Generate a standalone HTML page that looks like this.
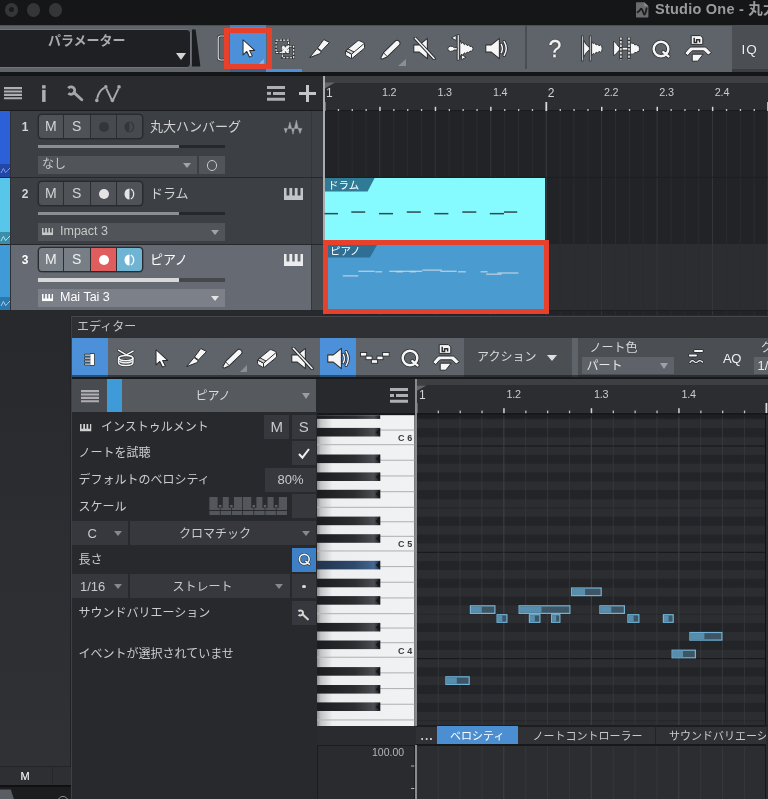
<!DOCTYPE html>
<html lang="ja">
<head>
<meta charset="utf-8">
<title>Studio One</title>
<style>
*{box-sizing:border-box;margin:0;padding:0}
html,body{width:768px;height:799px;overflow:hidden;background:#27282b}
body{background:linear-gradient(180deg,#27282b 0,#28292c 330px,#2d2e31 560px,#303134 767px)}
body{position:relative;font-family:"Liberation Sans","Noto Sans CJK JP",sans-serif;color:#c8c8c8;font-size:13px;line-height:1}
.a{position:absolute}
.t{position:absolute;white-space:nowrap;line-height:1;will-change:opacity}
.trk .num,.trk .name{will-change:opacity}
svg{position:absolute;overflow:visible}
/* title bar */
#title{left:0;top:0;width:768px;height:25px;background:#151618}
.tl{position:absolute;top:3.2px;width:13.4px;height:13.4px;border-radius:50%;background:#353638}
/* toolbar */
#tb{left:0;top:25px;width:768px;height:47px;background:#5f646b;border-top:1px solid #4c4f55}
#tbline{left:0;top:72px;width:768px;height:4px;background:#141517}
#hdr{left:0;top:76px;width:768px;height:34px;background:#2a2b2f}
#hdrline{left:0;top:109.8px;width:768px;height:1.8px;background:#1a1b1d}
/* tracks */
.trk{position:absolute;left:0;width:324px;background:#3c3f44}
.trk .strip{position:absolute;left:0;top:0;width:10px;height:100%}
.trk:after{content:"";position:absolute;left:10px;top:0;width:1px;height:100%;background:#2e3034}
.trk .sub{position:absolute;left:0;bottom:0;width:10px;height:13px}
.trk .num{position:absolute;left:19px;top:9.8px;width:12px;text-align:center;font-weight:bold;font-size:12px;color:#d0d0d0}
.trk .btns{position:absolute;left:38px;top:3.2px;width:105px;height:24.5px;border-radius:4px;border:1px solid #292b2f;background:#2c2e32;overflow:hidden;display:flex;gap:0.9px;box-shadow:0 0 0 0.5px rgba(30,32,35,0.6)}
.trk .btns div{flex:1 1 25px;background:#565a60;position:relative;color:#dcdcdc;font-size:14px;text-align:center;line-height:22px}
.trk .btns div:nth-child(1){flex-basis:23.6px}.trk .btns div:nth-child(2){flex-basis:26px}
.g{will-change:opacity;display:inline-block}
.trk .name{position:absolute;left:150px;top:9.2px;font-size:13px;color:#d0d0d0;white-space:nowrap}
.trk .sl{position:absolute;left:38px;top:34px;width:187px;height:3.4px;background:#26282b}
.trk .sl i{position:absolute;left:0;top:0;height:3.4px;width:141px;background:#8b8f95}
.trk .dd{position:absolute;left:38px;top:45.2px;height:17.5px;background:#53565c;font-size:12px;color:#c6c6c6;line-height:17px;padding-left:4px;white-space:nowrap}
.trk .rc{position:absolute;left:311.2px;top:0;width:12.8px;height:100%;background:#3c3f44;border-left:1.6px solid #33363a}
.tri{position:absolute;width:0;height:0;border-left:4.5px solid transparent;border-right:4.5px solid transparent;border-top:6px solid #9a9da2}
</style>
</head>
<body>
<!-- TITLE BAR -->
<div id="title" class="a">
  <div class="tl" style="left:4.5px"><div class="a" style="left:4px;top:4px;width:5px;height:5px;border-radius:50%;background:#1a1b1d"></div></div>
  <div class="tl" style="left:26.5px"></div>
  <div class="tl" style="left:48.5px"></div>
  <svg style="left:635.8px;top:1.5px" width="12.4" height="15.6" viewBox="0 0 13 16"><path d="M0.6 0H8.6L13 4.4V15.4Q13 16 12.4 16H0.6Q0 16 0 15.4V0.6Q0 0 0.6 0Z" fill="#696b6e"/><path d="M8.6 0V4.4H13Z" fill="#8a8c8f"/><path d="M1.6 10.6 Q3.4 9.4 4.6 7.6 Q5.8 6 6.6 8.2 Q7.4 10.4 8.4 12.6 Q9.2 13.8 10 11 L11.2 6.4" stroke="#1d1e20" stroke-width="1.9" fill="none" stroke-linecap="round"/></svg>
  <div class="t" style="left:655px;top:2px;font-size:14.5px;font-weight:bold;color:#9a9b9e;letter-spacing:0.24px">Studio One - 丸大</div>
</div>

<!-- MAIN TOOLBAR -->
<div id="tb" class="a"></div>
<div id="tbline" class="a"></div>
<div id="hdr" class="a"></div>
<div id="hdrline" class="a"></div>

<!-- icon symbols -->
<svg width="0" height="0" style="left:0;top:0">
<defs>
<symbol id="i-arrow" viewBox="0 0 24 24"><path d="M5.5 3 L5.5 19.5 L9.6 15.8 L12.6 22 L15.6 20.6 L12.7 14.7 L18.2 14.7 Z" fill="#fff" stroke="#2a2c2f" stroke-width="1.1" stroke-linejoin="round"/></symbol>
<symbol id="i-knife" viewBox="0 0 21 19"><g fill="#f6f6f6" stroke="#2a2c2f" stroke-width="1" stroke-linejoin="round"><path d="M14.8 0.5 L20.5 3.5 L12.5 11.9 L8.5 9 Z"/><path d="M8 9.6 L12.1 12.5 L11.6 14.4 L0.6 18.6 Z"/></g></symbol>
<symbol id="i-eraser" viewBox="0 0 20 19"><g fill="#f6f6f6" stroke="#2a2c2f" stroke-width="1" stroke-linejoin="round"><path d="M0.6 10.8 L12.6 1 Q13.6 0.3 14.8 0.8 L18.6 2.6 Q19.5 3.2 19.5 4.2 L19.5 7.4 Q19.5 8.2 18.8 8.8 L7.6 18 Q6.6 18.8 5.6 18.2 L1.4 15.8 Q0.6 15.2 0.6 14.4 Z"/><path d="M0.8 11 L6.5 14.2 L19.3 3.4 M6.5 14.2 L6.5 18.4" fill="none"/><path d="M3 8.9 L9 12 L6.5 14.1 L0.9 10.9Z" fill="#cfd0d2"/></g></symbol>
<symbol id="i-pencil" viewBox="0 0 21 21"><g transform="translate(1.4 19.6) rotate(-44.3)" fill="#f6f6f6" stroke="#2a2c2f" stroke-width="1" stroke-linejoin="round"><path d="M1.2 -1.3 L5.6 -2.8 L22 -2.8 A2.8 2.8 0 0 1 22 2.8 L5.6 2.8 L1.2 1.3 A1.3 1.3 0 0 1 1.2 -1.3 Z"/><path d="M5.6 -2.8 V2.8" fill="none" stroke-width="0.9"/></g></symbol>
<symbol id="i-mute" viewBox="0 0 24 24"><path d="M0.8 8.2 H6.6 L15 1.4 V22.6 L6.6 15.8 H0.8 Z" fill="#f6f6f6" stroke="#2a2c2f" stroke-width="1.1" stroke-linejoin="round"/><path d="M2.4 1.4 L22 22.4" stroke="#2a2c2f" stroke-width="3.6" stroke-linecap="round"/><path d="M2.4 1.4 L22 22.4" stroke="#f6f6f6" stroke-width="1.6" stroke-linecap="round"/></symbol>
<symbol id="i-spk" viewBox="0 0 24 24"><path d="M0.8 8.2 H6.6 L15 1.4 V22.6 L6.6 15.8 H0.8 Z" fill="#f6f6f6" stroke="#2a2c2f" stroke-width="1.1" stroke-linejoin="round"/><g fill="none" stroke-linecap="round"><path d="M17 7.6 Q19.4 12 17 16.4 M20 4.8 Q24.4 12 20 19.2" stroke="#2a2c2f" stroke-width="3.2"/><path d="M17 7.6 Q19.4 12 17 16.4 M20 4.8 Q24.4 12 20 19.2" stroke="#f6f6f6" stroke-width="1.5"/></g></symbol>
<symbol id="i-q" viewBox="0 0 24 24"><g fill="none" stroke-linecap="round"><path d="M12 4 A8 8 0 1 0 12 20 A8 8 0 1 0 12 4 Z M14.6 15.4 L20.2 20" stroke="#2a2c2f" stroke-width="4.4"/><path d="M12 4 A8 8 0 1 0 12 20 A8 8 0 1 0 12 4 Z M14.6 15.4 L20.2 20" stroke="#f6f6f6" stroke-width="2.7"/></g></symbol>
<symbol id="i-bounce" viewBox="0 0 28 27"><g fill="#f6f6f6" stroke="#2a2c2f" stroke-width="1" stroke-linejoin="round"><path d="M7.2 0.6 H16.4 L18.8 3 V9.4 H7.2 Z"/><path d="M0.7 18.2 L5.2 13 Q6.2 12 7.6 12 H20.4 Q21.8 12 22.8 13 L27.4 17.8 L24.2 20 L20.6 16.4 Q20 15.8 19.2 15.8 H8.8 Q8 15.8 7.4 16.4 L3.8 20.6 Z"/><path d="M8.2 19.2 H19.2 L13.8 26.2 H8.2 Z"/></g><path d="M10.2 2.8 V7.4 H12.6 V4.8 H15.6 V7.4" fill="none" stroke="#2a2c2f" stroke-width="1.5"/></symbol>
<symbol id="i-kbd" viewBox="0 0 12 8"><path d="M0 0H1.6V5H3.4V0H5.2V5H6.8V0H8.6V5H10.4V0H12V8H0Z"/></symbol>
</defs>
</svg>

<!-- toolbar content -->
<div class="a" style="left:-2px;top:28.5px;width:193px;height:39px;background:#1f2023;border:1px solid #70747a;border-radius:0 4px 4px 0"></div>
<svg style="left:192px;top:29px" width="10" height="38" viewBox="0 0 10 38"><path d="M0 0.5 H3.6 L8.4 37.5 H0 Z" fill="#1b1c1f"/></svg>
<div class="t" style="left:48px;top:33.7px;font-size:13px;font-weight:bold;color:#a9aaad">パラメーター</div>
<div class="tri" style="left:175.5px;top:53px;border-left-width:5.5px;border-right-width:5.5px;border-top:7px solid #d4d4d4"></div>
<svg style="left:216.8px;top:35.4px" width="8" height="26" viewBox="0 0 8 26"><path d="M7 1 H3.6 Q1.2 1 1.2 3.4 V22.6 Q1.2 25 3.6 25 H7" fill="none" stroke="#2a2c2f" stroke-width="2.4"/><path d="M7 1 H3.6 Q1.2 1 1.2 3.4 V22.6 Q1.2 25 3.6 25 H7" fill="none" stroke="#dedede" stroke-width="1.2"/></svg>
<div class="a" style="left:230px;top:25px;width:36px;height:44px;background:#4b90d8"></div><div class="a" style="left:230px;top:25px;width:36px;height:2px;background:#4480c2"></div>
<div class="a" style="left:230px;top:69px;width:36px;height:3px;background:#3d618a"></div><div class="a" style="left:266px;top:69px;width:36px;height:3px;background:#4b90d8"></div>
<div class="a" style="left:223.9px;top:27.7px;width:48.4px;height:41.2px;border:solid #e8412b;border-width:5.5px 5.9px 5.3px 5.8px"></div>
<svg style="left:259.2px;top:58.8px" width="4.8" height="4.8" viewBox="0 0 6 6"><path d="M6 0V6H0Z" fill="#93b8dc"/></svg>
<svg style="left:238px;top:37px" width="22" height="22"><use href="#i-arrow"/></svg>
<!-- marquee -->
<svg style="left:275.4px;top:39px" width="20" height="20" viewBox="0 0 20 20"><g fill="none"><rect x="1.1" y="1.1" width="12.4" height="12.4" stroke="#2a2c2f" stroke-width="2.2"/><rect x="7.3" y="7.3" width="11.4" height="11.4" stroke="#2a2c2f" stroke-width="2.2"/><rect x="1.1" y="1.1" width="12.4" height="12.4" stroke="#f2f2f2" stroke-width="1.1" stroke-dasharray="2.3 1.2"/><rect x="7.3" y="7.3" width="11.4" height="11.4" stroke="#f2f2f2" stroke-width="1.1" stroke-dasharray="2.3 1.2"/></g><path d="M7.6 7.6 L13.2 13.2 M13.2 7.6 L7.6 13.2" stroke="#f2f2f2" stroke-width="2.6"/></svg>
<svg style="left:308.5px;top:39px" width="21" height="19"><use href="#i-knife"/></svg>
<svg style="left:344.5px;top:40px" width="20" height="19"><use href="#i-eraser"/></svg>
<svg style="left:380px;top:39px" width="21" height="21"><use href="#i-pencil"/></svg>
<svg style="left:398px;top:59px" width="8" height="7" viewBox="0 0 8 7"><path d="M8 0V7H0Z" fill="#8b8f95"/></svg>
<svg style="left:413px;top:37px" width="23" height="23"><use href="#i-mute"/></svg>
<!-- split at transient -->
<svg style="left:447px;top:34px" width="28" height="27" viewBox="0 0 28 27"><g fill="#f6f6f6" stroke="#2a2c2f" stroke-width="0.9" stroke-linejoin="round"><path d="M10.2 0.6 H12.3 V26.3 H10.2 Z"/><path d="M9.2 1.3 L4.4 3.9 L9.2 6.5 Z"/><path d="M14.4 20.6 L19 23.2 L14.4 25.8 Z"/><path d="M0.8 14.8 Q0.8 12.4 3.6 12.2 Q6 12.2 7.2 13.6 L10.2 13.6 V16 L7.2 16 Q6 17.4 3.6 17.4 Q0.8 17.2 0.8 14.8 Z"/><path d="M12.8 6 L14.6 9.6 L15.8 8.2 L17.4 10.8 L18.8 9.6 L20.2 11.6 L21.8 10.8 L23 12.6 L24.6 12.2 L26.2 14.8 L24.6 17.4 L23 17 L21.8 18.8 L20.2 18 L18.8 20 L17.4 18.8 L15.8 21.4 L14.6 20 L12.8 23.6 Z"/></g></svg>
<svg style="left:485px;top:37px" width="23" height="23"><use href="#i-spk"/></svg>
<div class="a" style="left:525.3px;top:25px;width:1.5px;height:44px;background:#4a4d52"></div>
<div class="t" style="left:548.6px;top:37.6px;font-size:23px;color:#f4f4f4;-webkit-text-stroke:0.3px #f4f4f4;text-shadow:0 0 1.2px #26282b,0 0 1.2px #26282b">?</div>
<!-- strip silence icons -->
<svg style="left:581px;top:35px" width="22" height="27" viewBox="0 0 22 27"><g fill="#f6f6f6" stroke="#2a2c2f" stroke-width="0.9" stroke-linejoin="round"><path d="M2.6 5.2 Q5.2 10.6 8.2 12.3 H11 V14.9 H8.2 Q5.2 16.6 2.6 22.2 Z"/><path d="M10.6 6.4 L12.4 8.8 L13.6 7.8 L15.2 10 L16.6 9.2 L18 10.8 L19.4 10 L20.6 10.6 Q21.8 13.6 20.6 16.6 L19.4 17.2 L18 16.4 L16.6 18 L15.2 17.2 L13.6 19.4 L12.4 18.4 L10.6 20.8 Z"/><path d="M0.5 0.8 H2.2 V26 H0.5 Z"/><path d="M8.4 0.8 H10.1 V26 H8.4 Z"/></g></svg>
<svg style="left:613px;top:36px" width="27" height="25" viewBox="0 0 27 25"><g fill="#f6f6f6" stroke="#2a2c2f" stroke-width="0.9" stroke-linejoin="round"><path d="M0.6 5 L2.2 6.6 L3.4 7.6 L5 10 L6.8 11.3 V14.1 L5 15.4 L3.4 17.6 L2.2 18.6 L0.6 19.8 Z"/><path d="M8.9 11.3 H15 V14.1 H8.9 Z"/><path d="M17.2 5.6 L18.8 7.5 L20.2 7 L21.8 8.9 L23.2 8.5 L24.6 9.7 L26 9.7 Q27 12.6 26 15.5 L24.6 15.6 L23.2 16.8 L21.8 16.4 L20.2 18.4 L18.8 17.9 L17.2 19.3 Z"/></g><g stroke="#2a2c2f" stroke-width="3" fill="none"><path d="M7.9 1 V23.6 M16 1 V23.6"/></g><g stroke="#f6f6f6" stroke-width="1.5" stroke-dasharray="2.4 1.2" fill="none"><path d="M7.9 1.4 V23.4 M16 1.4 V23.4"/></g></svg>
<svg style="left:650px;top:38px" width="22" height="22"><use href="#i-q"/></svg>
<svg style="left:683.6px;top:35px" width="28" height="27"><use href="#i-bounce"/></svg>
<div class="a" style="left:731.5px;top:25px;width:37px;height:44px;background:#4b4e53"></div><div class="a" style="left:731.5px;top:69px;width:37px;height:3px;background:#3a3d41"></div>
<div class="t" style="left:741.6px;top:43.4px;font-size:13.5px;color:#f0f0f0;letter-spacing:0.9px;text-shadow:0 0 1px #2a2c2f">IQ</div>


<!--MID-START-->
<!-- header icons -->
<svg style="left:4.3px;top:87.2px" width="18" height="13" viewBox="0 0 18 13"><path d="M0 1.1H18M0 4.5H18M0 7.9H18M0 11.3H18" stroke="#aeafb2" stroke-width="2.1"/></svg>
<svg style="left:41px;top:85px" width="6" height="17" viewBox="0 0 6 17"><rect x="1.1" y="0.2" width="3.5" height="3.3" fill="#aeafb2"/><rect x="1.1" y="4.9" width="3.5" height="12" fill="#aeafb2"/></svg>
<svg style="left:56px;top:78px" width="80" height="30" viewBox="0 0 80 30"><g fill="none" stroke="#a6a7aa" stroke-linecap="butt"><path d="M12.2 10.2 A3.7 3.7 0 1 1 12.4 15.2" stroke-width="2.7"/><path d="M18 14.6 L25.8 21.8" stroke-width="2.9" stroke-linecap="round"/><path d="M41.2 20.6 Q42.6 12.6 48.6 9.6" stroke-width="1.9"/><path d="M50.4 10.6 L55.8 22 M57 22 L62.4 10.6" stroke-width="1.9"/></g><g fill="#a6a7aa"><circle cx="40.8" cy="22.4" r="1.8"/><circle cx="49.8" cy="8.9" r="1.8"/><circle cx="56.4" cy="22.4" r="1.8"/><circle cx="63" cy="8.9" r="1.8"/></g></svg>
<svg style="left:267px;top:86px" width="18" height="15" viewBox="0 0 18 15"><path d="M0 1.6H18M6 7.4H18M0 13.2H18" stroke="#aeafb2" stroke-width="3"/><path d="M0 7.4H4" stroke="#aeafb2" stroke-width="3"/></svg>
<svg style="left:299px;top:85px" width="17" height="17" viewBox="0 0 17 17"><path d="M8.5 0V17M0 8.5H17" stroke="#c4c5c8" stroke-width="3"/></svg>
<!-- arrangement ruler -->
<div class="a" style="left:324px;top:76px;width:444px;height:34px;background:#2c2d31"></div>
<div class="a" style="left:324px;top:76px;width:444px;height:6.6px;background:#3d3f43"></div>
<svg style="left:0;top:0" width="768" height="111" viewBox="0 0 768 111"><rect x="323.6" y="102" width="1.8" height="9.6" fill="#d8d8d8"/><rect x="337.8" y="109" width="1.3" height="2.6" fill="#c4c4c4"/><rect x="351.6" y="109" width="1.3" height="2.6" fill="#c4c4c4"/><rect x="365.5" y="109" width="1.3" height="2.6" fill="#c4c4c4"/><rect x="379.2" y="106.8" width="1.5" height="4.8" fill="#d4d4d4"/><rect x="393.2" y="109" width="1.3" height="2.6" fill="#c4c4c4"/><rect x="407.1" y="109" width="1.3" height="2.6" fill="#c4c4c4"/><rect x="420.9" y="109" width="1.3" height="2.6" fill="#c4c4c4"/><rect x="434.7" y="106.8" width="1.5" height="4.8" fill="#d4d4d4"/><rect x="448.7" y="109" width="1.3" height="2.6" fill="#c4c4c4"/><rect x="462.5" y="109" width="1.3" height="2.6" fill="#c4c4c4"/><rect x="476.4" y="109" width="1.3" height="2.6" fill="#c4c4c4"/><rect x="490.1" y="106.8" width="1.5" height="4.8" fill="#d4d4d4"/><rect x="504.1" y="109" width="1.3" height="2.6" fill="#c4c4c4"/><rect x="518.0" y="109" width="1.3" height="2.6" fill="#c4c4c4"/><rect x="531.8" y="109" width="1.3" height="2.6" fill="#c4c4c4"/><rect x="545.4" y="102" width="1.8" height="9.6" fill="#d8d8d8"/><rect x="559.6" y="109" width="1.3" height="2.6" fill="#c4c4c4"/><rect x="573.4" y="109" width="1.3" height="2.6" fill="#c4c4c4"/><rect x="587.3" y="109" width="1.3" height="2.6" fill="#c4c4c4"/><rect x="601.0" y="106.8" width="1.5" height="4.8" fill="#d4d4d4"/><rect x="615.0" y="109" width="1.3" height="2.6" fill="#c4c4c4"/><rect x="628.9" y="109" width="1.3" height="2.6" fill="#c4c4c4"/><rect x="642.7" y="109" width="1.3" height="2.6" fill="#c4c4c4"/><rect x="656.5" y="106.8" width="1.5" height="4.8" fill="#d4d4d4"/><rect x="670.5" y="109" width="1.3" height="2.6" fill="#c4c4c4"/><rect x="684.3" y="109" width="1.3" height="2.6" fill="#c4c4c4"/><rect x="698.2" y="109" width="1.3" height="2.6" fill="#c4c4c4"/><rect x="711.9" y="106.8" width="1.5" height="4.8" fill="#d4d4d4"/><rect x="725.9" y="109" width="1.3" height="2.6" fill="#c4c4c4"/><rect x="739.8" y="109" width="1.3" height="2.6" fill="#c4c4c4"/><rect x="753.6" y="109" width="1.3" height="2.6" fill="#c4c4c4"/><rect x="767.2" y="102" width="1.8" height="9.6" fill="#d8d8d8"/><path d="M325 82.6 H335 L325 88.4Z" fill="#62656a"/></svg>
<div class="t" style="left:326.0px;top:86.8px;font-size:12px;color:#d4d4d4">1</div>
<div class="t" style="left:382.0px;top:87.4px;font-size:10.8px;letter-spacing:-0.2px;color:#cbcbcd">1.2</div>
<div class="t" style="left:437.5px;top:87.4px;font-size:10.8px;letter-spacing:-0.2px;color:#cbcbcd">1.3</div>
<div class="t" style="left:492.9px;top:87.4px;font-size:10.8px;letter-spacing:-0.2px;color:#cbcbcd">1.4</div>
<div class="t" style="left:547.8px;top:86.8px;font-size:12px;color:#d4d4d4">2</div>
<div class="t" style="left:603.9px;top:87.4px;font-size:10.8px;letter-spacing:-0.2px;color:#cbcbcd">2.2</div>
<div class="t" style="left:659.3px;top:87.4px;font-size:10.8px;letter-spacing:-0.2px;color:#cbcbcd">2.3</div>
<div class="t" style="left:714.8px;top:87.4px;font-size:10.8px;letter-spacing:-0.2px;color:#cbcbcd">2.4</div>
<!-- tracks -->
<div class="trk" style="top:111px;height:65.6px;background:#3c3f44">
<div class="strip" style="background:#2b60d8"></div><div class="sub" style="background:#2347a8"><svg style="left:1px;bottom:3px" width="9" height="7" viewBox="0 0 9 7"><path d="M0 6 L2.4 1.4 L4.6 5.6 L6.6 3.4 L9 1" fill="none" stroke="#7f9be0" stroke-width="1"/></svg></div>
<div class="num" style="color:#d4d4d4">1</div>
<div class="btns"><div style="background:#4f5257;color:#d4d4d4"><span class="g">M</span></div><div style="background:#4f5257;color:#d4d4d4"><span class="g">S</span></div><div style="background:#474a4e"><span class="a" style="left:8px;top:6.5px;width:10px;height:10px;border-radius:50%;background:#34373a"></span></div><div style="background:#474a4e"><svg style="left:7.5px;top:5.5px" width="11" height="12" viewBox="0 0 11 12"><path d="M5.5 0.5 A5 5.5 0 0 0 5.5 11.5 Z" fill="#34373a"/><path d="M6.6 1 A5 5.5 0 0 1 6.6 11" fill="none" stroke="#34373a" stroke-width="1.2"/></svg></div></div>
<div class="name" style="color:#d2d2d2">丸大ハンバーグ</div>
<svg style="left:283.5px;top:8.6px" width="18" height="15" viewBox="0 0 18 15"><path d="M0.2 8.4 H3.4 L1.8 13 Z M4.2 8.4 L5.9 2 L7.6 8.4 L9 14.3 L10.4 8.4 L12.4 0.2 L14.2 8.4 H17.8 L16 13.6 L14.2 8.4 H10.6 L9 8.4 L7.6 8.4 Z" fill="#a6a7aa" stroke="#a6a7aa" stroke-width="0.5" stroke-linejoin="round"/></svg>
<div class="sl" style="background:#26282b"><i style="background:#8b8f95"></i></div>
<div class="dd" style="width:159px;background:#515459;color:#c8c8c8"><span class="g">なし</span></div>
<div class="tri" style="left:182.9px;top:51.6px;border-left-width:4.3px;border-right-width:4.3px;border-top:5.4px solid #a2a3a5"></div>
<div class="dd" style="left:198.5px;width:26.5px;padding:0;background:#515459"><span class="a" style="left:8.3px;top:4.2px;width:10.4px;height:10.4px;border-radius:50%;border:1.8px solid #c6c7c8"></span></div>
<div class="rc" style="background:#3c3f44"></div>
</div>
<div class="trk" style="top:178px;height:66.5px;background:#3c3f44">
<div class="strip" style="background:#57c6e8"></div><div class="sub" style="background:#3c8ea8"><svg style="left:1px;bottom:3px" width="9" height="7" viewBox="0 0 9 7"><path d="M0 6 L2.4 1.4 L4.6 5.6 L6.6 3.4 L9 1" fill="none" stroke="#a8e4f4" stroke-width="1"/></svg></div>
<div class="num" style="color:#d4d4d4">2</div>
<div class="btns"><div style="background:#4f5257;color:#d4d4d4"><span class="g">M</span></div><div style="background:#4f5257;color:#d4d4d4"><span class="g">S</span></div><div style="background:#4f5257"><span class="a" style="left:8px;top:6.5px;width:10px;height:10px;border-radius:50%;background:#e4e4e4"></span></div><div style="background:#4f5257"><svg style="left:7.5px;top:5.5px" width="11" height="12" viewBox="0 0 11 12"><path d="M5.5 0.5 A5 5.5 0 0 0 5.5 11.5 Z" fill="#e4e4e4"/><path d="M6.8 1 A5 5.5 0 0 1 6.8 11" fill="none" stroke="#e4e4e4" stroke-width="1.2"/></svg></div></div>
<div class="name" style="color:#d2d2d2">ドラム</div>
<svg style="left:284px;top:9.5px" width="19" height="12" viewBox="0 0 12 8" preserveAspectRatio="none"><use href="#i-kbd" fill="#c4c5c8"/></svg>
<div class="sl" style="background:#26282b"><i style="background:#8b8f95"></i></div>
<div class="dd" style="width:187px;background:#515459;color:#c8c8c8;padding-left:22px;font-size:12.5px"><span class="g">Impact 3</span></div>
<svg style="left:41.8px;top:50.2px" width="11.2" height="7.2" viewBox="0 0 12 8" preserveAspectRatio="none"><use href="#i-kbd" fill="#c8c8c8"/></svg>
<div class="tri" style="left:210.9px;top:51.8px;border-left-width:4.3px;border-right-width:4.3px;border-top:5.4px solid #a2a3a5"></div>
<div class="rc" style="background:#3c3f44"></div>
</div>
<div class="trk" style="top:244.3px;height:65.7px;background:#666a72">
<div class="strip" style="background:#3f9bd8"></div><div class="sub" style="background:#2a78ae"><svg style="left:1px;bottom:3px" width="9" height="7" viewBox="0 0 9 7"><path d="M0 6 L2.4 1.4 L4.6 5.6 L6.6 3.4 L9 1" fill="none" stroke="#9fd0f0" stroke-width="1"/></svg></div>
<div class="num" style="color:#fff">3</div>
<div class="btns"><div style="background:#787e86;color:#f0f0f0"><span class="g">M</span></div><div style="background:#787e86;color:#f0f0f0"><span class="g">S</span></div><div style="background:#e05d5d"><span class="a" style="left:8px;top:6.5px;width:10px;height:10px;border-radius:50%;background:#ffffff"></span></div><div style="background:#6fb4d2"><svg style="left:7.5px;top:5.5px" width="11" height="12" viewBox="0 0 11 12"><path d="M5.5 0.5 A5 5.5 0 0 0 5.5 11.5 Z" fill="#ffffff"/><path d="M6.8 1 A5 5.5 0 0 1 6.8 11" fill="none" stroke="#ffffff" stroke-width="1.2"/></svg></div></div>
<div class="name" style="color:#fff">ピアノ</div>
<svg style="left:284px;top:9.5px" width="19" height="12" viewBox="0 0 12 8" preserveAspectRatio="none"><use href="#i-kbd" fill="#ececec"/></svg>
<div class="sl" style="background:#44474c"><i style="background:#d6d8da"></i></div>
<div class="dd" style="width:187px;background:#7c8189;color:#ffffff;padding-left:22px;font-size:12.5px"><span class="g">Mai Tai 3</span></div>
<svg style="left:41.8px;top:50.2px" width="11.2" height="7.2" viewBox="0 0 12 8" preserveAspectRatio="none"><use href="#i-kbd" fill="#ffffff"/></svg>
<div class="tri" style="left:210.9px;top:51.8px;border-left-width:4.3px;border-right-width:4.3px;border-top:5.4px solid #e4e4e4"></div>
<div class="rc" style="background:#46494e"></div>
</div>
<div class="a" style="left:0;top:176.5px;width:324px;height:1.5px;background:#26282b"></div>
<div class="a" style="left:0;top:243.8px;width:324px;height:1px;background:#26282b"></div>
<div class="a" style="left:323.4px;top:76px;width:1.5px;height:238px;background:#a8aaad"></div>
<!-- arrangement -->
<div class="a" style="left:325.4px;top:111px;width:443px;height:204px;background:#222326"></div>
<div class="a" style="left:325.4px;top:243.8px;width:443px;height:66.4px;background:#2c2d30"></div>
<svg style="left:0;top:0" width="768" height="316" viewBox="0 0 768 316"><rect x="337.8" y="111" width="1" height="204" fill="#2b2c30"/><rect x="351.6" y="111" width="1" height="204" fill="#2b2c30"/><rect x="365.5" y="111" width="1" height="204" fill="#2b2c30"/><rect x="379.3" y="111" width="1" height="204" fill="#333539"/><rect x="393.2" y="111" width="1" height="204" fill="#2b2c30"/><rect x="407.1" y="111" width="1" height="204" fill="#2b2c30"/><rect x="420.9" y="111" width="1" height="204" fill="#2b2c30"/><rect x="434.8" y="111" width="1" height="204" fill="#333539"/><rect x="448.7" y="111" width="1" height="204" fill="#2b2c30"/><rect x="462.5" y="111" width="1" height="204" fill="#2b2c30"/><rect x="476.4" y="111" width="1" height="204" fill="#2b2c30"/><rect x="490.2" y="111" width="1" height="204" fill="#333539"/><rect x="504.1" y="111" width="1" height="204" fill="#2b2c30"/><rect x="518.0" y="111" width="1" height="204" fill="#2b2c30"/><rect x="531.8" y="111" width="1" height="204" fill="#2b2c30"/><rect x="545.7" y="111" width="1" height="204" fill="#3a3c40"/><rect x="559.6" y="111" width="1" height="204" fill="#2b2c30"/><rect x="573.4" y="111" width="1" height="204" fill="#2b2c30"/><rect x="587.3" y="111" width="1" height="204" fill="#2b2c30"/><rect x="601.1" y="111" width="1" height="204" fill="#333539"/><rect x="615.0" y="111" width="1" height="204" fill="#2b2c30"/><rect x="628.9" y="111" width="1" height="204" fill="#2b2c30"/><rect x="642.7" y="111" width="1" height="204" fill="#2b2c30"/><rect x="656.6" y="111" width="1" height="204" fill="#333539"/><rect x="670.5" y="111" width="1" height="204" fill="#2b2c30"/><rect x="684.3" y="111" width="1" height="204" fill="#2b2c30"/><rect x="698.2" y="111" width="1" height="204" fill="#2b2c30"/><rect x="712.0" y="111" width="1" height="204" fill="#333539"/><rect x="725.9" y="111" width="1" height="204" fill="#2b2c30"/><rect x="739.8" y="111" width="1" height="204" fill="#2b2c30"/><rect x="753.6" y="111" width="1" height="204" fill="#2b2c30"/><rect x="767.5" y="111" width="1" height="204" fill="#3a3c40"/><rect x="325.4" y="176.8" width="443" height="1" fill="#1e1f21"/><rect x="325.4" y="310" width="443" height="1" fill="#1c1d1f"/></svg>
<div class="a" style="left:325px;top:178px;width:219.8px;height:62px;background:#86fbff"></div>
<svg style="left:325px;top:178px" width="50" height="14" viewBox="0 0 50 14"><path d="M0 0H49.6L42.6 13.4H0Z" fill="#2f7b96"/></svg>
<div class="t" style="left:328px;top:179.5px;font-size:10.5px;color:#fff">ドラム</div>
<svg style="left:0;top:0" width="768" height="316" viewBox="0 0 768 316"><rect x="324.5" y="212.9" width="13.5" height="1.5" fill="#34494d"/><rect x="351.3" y="211.3" width="13.9" height="1.5" fill="#34494d"/><rect x="379" y="212.9" width="14.0" height="1.5" fill="#34494d"/><rect x="406.8" y="211.3" width="14.0" height="1.5" fill="#34494d"/><rect x="434.3" y="212.9" width="14.1" height="1.5" fill="#34494d"/><rect x="462.3" y="211.3" width="14.0" height="1.5" fill="#34494d"/><rect x="489.8" y="212.9" width="14.2" height="1.5" fill="#34494d"/><rect x="504" y="211.3" width="13.2" height="1.5" fill="#34494d"/></svg>
<div class="a" style="left:325px;top:241px;width:222px;height:71px;background:#4a9bd0"></div>
<svg style="left:328px;top:245px" width="50" height="14" viewBox="0 0 50 14"><path d="M0 0H49L42 12.6H0Z" fill="#2f6f94"/></svg>
<div class="t" style="left:330px;top:245.5px;font-size:10.5px;color:#fff">ピアノ</div>
<svg style="left:0;top:0" width="768" height="316" viewBox="0 0 768 316"><rect x="342.8" y="275.34" width="15.5" height="1.1" fill="#c9d6e0"/><rect x="358.3" y="270.70" width="16.3" height="1.1" fill="#c9d6e0"/><rect x="375.2" y="271.28" width="7.0" height="1.1" fill="#c9d6e0"/><rect x="389.2" y="270.70" width="33.0" height="1.1" fill="#c9d6e0"/><rect x="395.7" y="271.28" width="7.4" height="1.1" fill="#c9d6e0"/><rect x="409.8" y="271.28" width="6.0" height="1.1" fill="#c9d6e0"/><rect x="422.4" y="269.54" width="19.5" height="1.1" fill="#c9d6e0"/><rect x="440.4" y="270.70" width="16.3" height="1.1" fill="#c9d6e0"/><rect x="458.1" y="271.28" width="7.7" height="1.1" fill="#c9d6e0"/><rect x="480.6" y="271.28" width="7.0" height="1.1" fill="#c9d6e0"/><rect x="497.4" y="272.44" width="21.0" height="1.1" fill="#c9d6e0"/><rect x="486.1" y="273.60" width="15.5" height="1.1" fill="#c9d6e0"/></svg>
<div class="a" style="left:322.9px;top:239.9px;width:225.9px;height:74px;border:5.9px solid #e8412b"></div>
<!--MID-END-->

<!--TRACKS-->

<!--ARRANGE-->

<!--ED-START-->
<!-- editor frame -->
<div class="a" style="left:71px;top:316px;width:697px;height:483px;background:#28292d;border-left:1px solid #3d4044;border-top:1px solid #45474c;box-shadow:-1px 0 0 #222326"></div>
<div class="a" style="left:72px;top:317px;width:696px;height:21px;background:#2e3033"></div>
<div class="t" style="left:77px;top:321px;font-size:12px;color:#c4c5c8">エディター</div>
<div class="a" style="left:72px;top:338px;width:392px;height:39px;background:#5f646b"></div>
<div class="a" style="left:464px;top:338px;width:304px;height:39px;background:#4b4f54"></div>
<div class="a" style="left:572px;top:338px;width:5.5px;height:39px;background:#5f646b"></div>
<div class="a" style="left:72px;top:377.7px;width:696px;height:1.3px;background:#17181a"></div>
<div class="a" style="left:72px;top:338px;width:35.6px;height:39px;background:#4b90d8"></div>
<div class="a" style="left:320px;top:338px;width:36px;height:39px;background:#4b90d8"></div>
<div class="a" style="left:72px;top:374.5px;width:696px;height:3.3px;background:rgba(10,12,16,0.5)"></div>
<svg style="left:83.6px;top:352.6px" width="11" height="13" viewBox="0 0 11 13"><g fill="#fff" stroke="#2a2c2f" stroke-width="0.8"><path d="M6.4 0.5 H10.4 V12.5 H6.4 Z"/><path d="M0.5 1.2 H7 V3 H0.5Z M0.5 4.2 H7 V6 H0.5Z M0.5 7.2 H7 V9 H0.5Z M0.5 10.2 H7 V12 H0.5Z"/></g><path d="M6.4 1.2 H9.8 V12 H6.4Z" fill="#fff"/></svg>
<svg style="left:117px;top:349px" width="17.5" height="17.5" viewBox="0 0 20 20"><g fill="none" stroke="#2a2c2f" stroke-width="3.2" stroke-linecap="round"><path d="M1.6 1.4 L11.6 7.4 M18.4 2.4 L9.6 7.4"/><path d="M1.8 10.4 V15.4 Q1.8 18.8 10 18.8 Q18.2 18.8 18.2 15.4 V10.4"/><ellipse cx="10" cy="10.4" rx="8.2" ry="3"/></g><g fill="none" stroke="#f6f6f6" stroke-width="1.7" stroke-linecap="round"><path d="M1.6 1.4 L11.6 7.4 M18.4 2.4 L9.6 7.4"/><path d="M1.8 10.4 V15.4 Q1.8 18.8 10 18.8 Q18.2 18.8 18.2 15.4 V10.4"/><ellipse cx="10" cy="10.4" rx="8.2" ry="3"/></g><path d="M2.6 13.4 Q10 16.8 17.4 13.4 V15 Q10 18.2 2.6 15Z" fill="#f6f6f6"/></svg>
<svg style="left:150.5px;top:347px" width="22" height="22"><use href="#i-arrow"/></svg>
<svg style="left:185.6px;top:348.2px" width="21" height="19"><use href="#i-knife"/></svg>
<svg style="left:221.6px;top:348.4px" width="21" height="21"><use href="#i-pencil"/></svg>
<svg style="left:240px;top:365px" width="7" height="7" viewBox="0 0 7 7"><path d="M7 0V7H0Z" fill="#8b8f95"/></svg>
<svg style="left:257px;top:348.6px" width="20" height="19"><use href="#i-eraser"/></svg>
<svg style="left:291px;top:346.5px" width="23" height="23"><use href="#i-mute"/></svg>
<svg style="left:327px;top:346.5px" width="23" height="23"><use href="#i-spk"/></svg>
<svg style="left:359.6px;top:352.2px" width="30" height="12" viewBox="0 0 30 12"><g fill="#f6f6f6" stroke="#2a2c2f" stroke-width="0.9"><rect x="0.5" y="0.5" width="6.2" height="3.6"/><rect x="5.9" y="4.1" width="6.2" height="3.6"/><rect x="11.4" y="7.7" width="6.2" height="3.6"/><rect x="16.9" y="4.1" width="6.2" height="3.6"/><rect x="22.6" y="0.5" width="6.6" height="3.6"/></g></svg>
<svg style="left:398.5px;top:347px" width="22" height="22"><use href="#i-q"/></svg>
<svg style="left:432.2px;top:344.2px" width="28" height="27"><use href="#i-bounce"/></svg>
<div class="t" style="left:477px;top:351px;font-size:12px;color:#d8d8d8">アクション</div>
<div class="tri" style="left:546.5px;top:355px;border-left-width:5.5px;border-right-width:5.5px;border-top:6.5px solid #e0e0e0"></div>
<div class="t" style="left:589.5px;top:341.7px;font-size:12px;color:#d8d8d8">ノート色</div>
<div class="a" style="left:582px;top:357px;width:91.5px;height:17px;background:#5f6369"></div>
<div class="t" style="left:586.5px;top:359.8px;font-size:12px;color:#e8e8e8">パート</div>
<div class="tri" style="left:659.6px;top:362.6px;border-top:6.4px solid #9da0a5"></div>
<svg style="left:688px;top:349px" width="17" height="17" viewBox="0 0 17 17"><g stroke="#26282b" stroke-width="3.6" stroke-linecap="round" fill="none"><path d="M7 2H14M1.8 6.6H8"/><path d="M2 13.4 Q4 10.4 6 12.4 Q8 14.6 10 12.4 Q12 10.4 14.6 13" stroke-width="2.6"/></g><g stroke="#f4f4f4" stroke-width="2" stroke-linecap="round" fill="none"><path d="M7 2H14M1.8 6.6H8"/><path d="M2 13.4 Q4 10.4 6 12.4 Q8 14.6 10 12.4 Q12 10.4 14.6 13" stroke-width="1.2"/></g></svg>
<div class="t" style="left:723px;top:352px;font-size:13px;color:#f0f0f0;letter-spacing:-0.5px">AQ</div>
<div class="t" style="left:760.6px;top:341.6px;font-size:12px;color:#d8d8d8">クオ</div>
<div class="a" style="left:754px;top:357px;width:20px;height:17px;background:#5f6369"></div>
<div class="t" style="left:757.5px;top:359px;font-size:13px;color:#e8e8e8">1/16</div>
<div class="a" style="left:72px;top:379px;width:244px;height:32.9px;background:#56595e"></div>
<div class="a" style="left:72px;top:379px;width:35px;height:32.9px;background:#484b50"></div>
<div class="a" style="left:107px;top:379px;width:15px;height:32.9px;background:#3f9bd8"></div>
<svg style="left:80.5px;top:390px" width="18" height="13" viewBox="0 0 18 13"><path d="M0 1.1H18M0 4.5H18M0 7.9H18M0 11.3H18" stroke="#aeafb2" stroke-width="2.1"/></svg>
<div class="t" style="left:195.5px;top:389.6px;font-size:12px;color:#dcdcdc">ピアノ</div>
<div class="tri" style="left:301.5px;top:393px;border-top:6px solid #9a9da2"></div>
<div class="a" style="left:316px;top:379px;width:99px;height:36px;background:#28292c"></div>
<svg style="left:390px;top:388px" width="18" height="15" viewBox="0 0 18 15"><path d="M0 1.6H18M6 7.4H18M0 13.2H18M0 7.4H4" stroke="#aeafb2" stroke-width="3"/></svg>
<svg style="left:80px;top:423.5px" width="11.5" height="7.5" viewBox="0 0 12 8" preserveAspectRatio="none"><use href="#i-kbd" fill="#d0d0d0"/></svg>
<div class="t" style="left:101px;top:420.9px;font-size:12px;color:#cbccce">インストゥルメント</div>
<div class="a" style="left:264px;top:414.5px;width:25px;height:24px;background:#36383d"></div>
<div class="a" style="left:291.5px;top:414.5px;width:24.5px;height:24px;background:#36383d"></div>
<div class="t" style="left:264px;top:419px;width:25.5px;text-align:center;font-size:15px;color:#c8c9cc">M</div>
<div class="t" style="left:291.5px;top:419px;width:24.5px;text-align:center;font-size:15px;color:#c8c9cc">S</div>
<div class="t" style="left:78.6px;top:447.4px;font-size:12px;color:#cbccce">ノートを試聴</div>
<div class="a" style="left:291.5px;top:441px;width:24.5px;height:24px;background:#36383d"></div>
<svg style="left:298px;top:447.5px" width="12" height="11" viewBox="0 0 12 11"><path d="M1 6 L4.4 9.6 L11 1" fill="none" stroke="#f0f0f0" stroke-width="2"/></svg>
<div class="t" style="left:78.6px;top:473.9px;font-size:12px;color:#cbccce">デフォルトのベロシティ</div>
<div class="a" style="left:265px;top:467.5px;width:51px;height:24px;background:#36383d"></div>
<div class="t" style="left:265px;top:473px;width:51px;text-align:center;font-size:13px;color:#c8c9cc">80%</div>
<div class="t" style="left:78.6px;top:500.9px;font-size:12px;color:#cbccce">スケール</div>
<div class="a" style="left:291.5px;top:494px;width:24.5px;height:24px;background:#36383d"></div>
<svg style="left:208.5px;top:497px" width="79" height="18" viewBox="0 0 79 18"><rect x="0.4" y="0" width="10.4" height="13" fill="#53565b"/><rect x="0.4" y="14" width="10.4" height="4" fill="#53565b"/><rect x="11.6" y="0" width="10.4" height="13" fill="#53565b"/><rect x="11.6" y="14" width="10.4" height="4" fill="#53565b"/><rect x="22.8" y="0" width="10.4" height="13" fill="#53565b"/><rect x="22.8" y="14" width="10.4" height="4" fill="#53565b"/><rect x="34.0" y="0" width="10.4" height="13" fill="#53565b"/><rect x="34.0" y="14" width="10.4" height="4" fill="#53565b"/><rect x="45.2" y="0" width="10.4" height="13" fill="#53565b"/><rect x="45.2" y="14" width="10.4" height="4" fill="#53565b"/><rect x="56.4" y="0" width="10.4" height="13" fill="#53565b"/><rect x="56.4" y="14" width="10.4" height="4" fill="#53565b"/><rect x="67.6" y="0" width="10.4" height="13" fill="#53565b"/><rect x="67.6" y="14" width="10.4" height="4" fill="#53565b"/><rect x="8.6" y="0" width="5.2" height="11" fill="#2a2b2f"/><rect x="10.0" y="8" width="2.4" height="2.4" fill="#5d6065"/><rect x="19.8" y="0" width="5.2" height="11" fill="#2a2b2f"/><rect x="21.2" y="8" width="2.4" height="2.4" fill="#5d6065"/><rect x="42.2" y="0" width="5.2" height="11" fill="#2a2b2f"/><rect x="43.6" y="8" width="2.4" height="2.4" fill="#5d6065"/><rect x="53.4" y="0" width="5.2" height="11" fill="#2a2b2f"/><rect x="54.8" y="8" width="2.4" height="2.4" fill="#5d6065"/><rect x="64.6" y="0" width="5.2" height="11" fill="#2a2b2f"/><rect x="66.0" y="8" width="2.4" height="2.4" fill="#5d6065"/></svg>
<div class="a" style="left:72px;top:521px;width:56px;height:24px;background:#36383d"></div>
<div class="a" style="left:130px;top:521px;width:186px;height:24px;background:#36383d"></div>
<div class="t" style="left:87.5px;top:526.5px;font-size:13px;color:#c8c9cc">C</div>
<div class="tri" style="left:113.5px;top:530.5px;border-left-width:4px;border-right-width:4px;border-top:5.5px solid #85888e"></div>
<div class="t" style="left:179px;top:527.6px;font-size:12px;color:#c8c9cc">クロマチック</div>
<div class="tri" style="left:301.5px;top:530.5px;border-left-width:4px;border-right-width:4px;border-top:5.5px solid #85888e"></div>
<div class="t" style="left:78.6px;top:553.9px;font-size:12px;color:#cbccce">長さ</div>
<div class="a" style="left:291.5px;top:547.5px;width:24.5px;height:24px;background:#3e80c6"></div>
<svg style="left:296.8px;top:552.4px" width="14.6" height="14.6"><use href="#i-q"/></svg>
<div class="a" style="left:72px;top:574px;width:56px;height:24px;background:#36383d"></div>
<div class="a" style="left:130px;top:574px;width:159.5px;height:24px;background:#36383d"></div>
<div class="a" style="left:291.5px;top:574px;width:24.5px;height:24px;background:#36383d"></div>
<div class="t" style="left:80px;top:579.5px;font-size:13px;color:#c8c9cc">1/16</div>
<div class="tri" style="left:113.5px;top:583.5px;border-left-width:4px;border-right-width:4px;border-top:5.5px solid #85888e"></div>
<div class="t" style="left:172.5px;top:580.6px;font-size:12px;color:#c8c9cc">ストレート</div>
<div class="tri" style="left:275px;top:583.5px;border-left-width:4px;border-right-width:4px;border-top:5.5px solid #85888e"></div>
<div class="a" style="left:302px;top:584.5px;width:3.6px;height:3.6px;border-radius:50%;background:#d8d8d8"></div>
<div class="t" style="left:78.6px;top:607.4px;font-size:12px;color:#cbccce">サウンドバリエーション</div>
<div class="a" style="left:291.5px;top:601px;width:24.5px;height:24px;background:#36383d"></div>
<svg style="left:296.6px;top:606.8px" width="12.4" height="13.8" viewBox="10 4 18 20"><g fill="none" stroke="#d4d4d4"><path d="M12.2 10.2 A3.7 3.7 0 1 1 12.4 15.2" stroke-width="2.9"/><path d="M18 14.6 L25.8 21.8" stroke-width="3.1" stroke-linecap="round"/></g></svg>
<div class="t" style="left:78.6px;top:648.4px;font-size:12px;color:#cbccce">イベントが選択されていませ</div>
<div class="a" style="left:416px;top:379px;width:352px;height:34px;background:#2c2d31"></div>
<div class="a" style="left:416px;top:379px;width:352px;height:6.4px;background:#3d3f43"></div>
<div class="a" style="left:316.5px;top:413px;width:452px;height:2.4px;background:#17181a"></div>
<svg style="left:0;top:0" width="768" height="415" viewBox="0 0 768 415"><rect x="415.5" y="403" width="1.8" height="10" fill="#d8d8d8"/><rect x="437.7" y="410.6" width="1.3" height="2.6" fill="#c4c4c4"/><rect x="459.6" y="410.6" width="1.3" height="2.6" fill="#c4c4c4"/><rect x="481.4" y="410.6" width="1.3" height="2.6" fill="#c4c4c4"/><rect x="503.2" y="408.2" width="1.5" height="5" fill="#d4d4d4"/><rect x="525.2" y="410.6" width="1.3" height="2.6" fill="#c4c4c4"/><rect x="547.0" y="410.6" width="1.3" height="2.6" fill="#c4c4c4"/><rect x="568.9" y="410.6" width="1.3" height="2.6" fill="#c4c4c4"/><rect x="590.7" y="408.2" width="1.5" height="5" fill="#d4d4d4"/><rect x="612.7" y="410.6" width="1.3" height="2.6" fill="#c4c4c4"/><rect x="634.5" y="410.6" width="1.3" height="2.6" fill="#c4c4c4"/><rect x="656.4" y="410.6" width="1.3" height="2.6" fill="#c4c4c4"/><rect x="678.2" y="408.2" width="1.5" height="5" fill="#d4d4d4"/><rect x="700.2" y="410.6" width="1.3" height="2.6" fill="#c4c4c4"/><rect x="722.0" y="410.6" width="1.3" height="2.6" fill="#c4c4c4"/><rect x="743.9" y="410.6" width="1.3" height="2.6" fill="#c4c4c4"/><rect x="765.5" y="403" width="1.8" height="10" fill="#d8d8d8"/><path d="M417 385.4 H426.4 L417 390.8Z" fill="#62656a"/></svg>
<div class="t" style="left:418.9px;top:389px;font-size:12px;color:#d4d4d4">1</div>
<div class="t" style="left:506.4px;top:389.2px;font-size:10.8px;letter-spacing:-0.2px;color:#cbcbcd">1.2</div>
<div class="t" style="left:593.9px;top:389.2px;font-size:10.8px;letter-spacing:-0.2px;color:#cbcbcd">1.3</div>
<div class="t" style="left:681.4px;top:389.2px;font-size:10.8px;letter-spacing:-0.2px;color:#cbcbcd">1.4</div>
<svg style="left:0;top:0" width="768" height="799" viewBox="0 0 768 799"><rect x="416" y="415.4" width="352" height="310.6" fill="#2c2d31"/><rect x="416" y="720.12" width="352" height="1.1" fill="#26272a"/><rect x="416" y="702.90" width="352" height="8.86" fill="#232427"/><rect x="416" y="685.18" width="352" height="8.86" fill="#232427"/><rect x="416" y="667.46" width="352" height="8.86" fill="#232427"/><rect x="416" y="658.10" width="352" height="1.1" fill="#17181a"/><rect x="416" y="640.88" width="352" height="8.86" fill="#232427"/><rect x="416" y="623.16" width="352" height="8.86" fill="#232427"/><rect x="416" y="613.80" width="352" height="1.1" fill="#26272a"/><rect x="416" y="596.58" width="352" height="8.86" fill="#232427"/><rect x="416" y="578.86" width="352" height="8.86" fill="#232427"/><rect x="416" y="561.14" width="352" height="8.86" fill="#232427"/><rect x="416" y="551.78" width="352" height="1.1" fill="#17181a"/><rect x="416" y="534.56" width="352" height="8.86" fill="#232427"/><rect x="416" y="516.84" width="352" height="8.86" fill="#232427"/><rect x="416" y="507.48" width="352" height="1.1" fill="#26272a"/><rect x="416" y="490.26" width="352" height="8.86" fill="#232427"/><rect x="416" y="472.54" width="352" height="8.86" fill="#232427"/><rect x="416" y="454.82" width="352" height="8.86" fill="#232427"/><rect x="416" y="445.46" width="352" height="1.1" fill="#17181a"/><rect x="416" y="428.24" width="352" height="8.86" fill="#232427"/><rect x="416" y="415.40" width="352" height="3.98" fill="#232427"/><rect x="415.8" y="415.4" width="1.1" height="383.6" fill="#45474b" opacity="0.75"/><rect x="437.7" y="415.4" width="1" height="383.6" fill="#3a3c40" opacity="0.7"/><rect x="459.6" y="415.4" width="1" height="383.6" fill="#3a3c40" opacity="0.7"/><rect x="481.4" y="415.4" width="1" height="383.6" fill="#3a3c40" opacity="0.7"/><rect x="503.3" y="415.4" width="1.1" height="383.6" fill="#45474b" opacity="0.75"/><rect x="525.2" y="415.4" width="1" height="383.6" fill="#3a3c40" opacity="0.7"/><rect x="547.0" y="415.4" width="1" height="383.6" fill="#3a3c40" opacity="0.7"/><rect x="568.9" y="415.4" width="1" height="383.6" fill="#3a3c40" opacity="0.7"/><rect x="590.8" y="415.4" width="1.1" height="383.6" fill="#45474b" opacity="0.75"/><rect x="612.7" y="415.4" width="1" height="383.6" fill="#3a3c40" opacity="0.7"/><rect x="634.5" y="415.4" width="1" height="383.6" fill="#3a3c40" opacity="0.7"/><rect x="656.4" y="415.4" width="1" height="383.6" fill="#3a3c40" opacity="0.7"/><rect x="678.3" y="415.4" width="1.1" height="383.6" fill="#45474b" opacity="0.75"/><rect x="700.2" y="415.4" width="1" height="383.6" fill="#3a3c40" opacity="0.7"/><rect x="722.0" y="415.4" width="1" height="383.6" fill="#3a3c40" opacity="0.7"/><rect x="743.9" y="415.4" width="1" height="383.6" fill="#3a3c40" opacity="0.7"/><rect x="765.8" y="415.4" width="1.1" height="383.6" fill="#45474b" opacity="0.75"/><rect x="445.9" y="676.8" width="23.3" height="7.6" fill="#3e5565" stroke="#70b3d5" stroke-width="1.2"/><rect x="446.5" y="677.4" width="10.3" height="6.4" fill="#578eae"/><rect x="470.4" y="605.8" width="24.5" height="7.6" fill="#3e5565" stroke="#70b3d5" stroke-width="1.2"/><rect x="471.0" y="606.4" width="10.8" height="6.4" fill="#578eae"/><rect x="497.1" y="614.7" width="9.8" height="7.6" fill="#3e5565" stroke="#70b3d5" stroke-width="1.2"/><rect x="497.7" y="615.3" width="4.6" height="6.4" fill="#578eae"/><rect x="519.1" y="605.8" width="50.8" height="7.6" fill="#3e5565" stroke="#70b3d5" stroke-width="1.2"/><rect x="519.7" y="606.4" width="21.8" height="6.4" fill="#578eae"/><rect x="529.4" y="614.7" width="10.5" height="7.6" fill="#3e5565" stroke="#70b3d5" stroke-width="1.2"/><rect x="530.0" y="615.3" width="4.9" height="6.4" fill="#578eae"/><rect x="551.6" y="614.7" width="8.3" height="7.6" fill="#3e5565" stroke="#70b3d5" stroke-width="1.2"/><rect x="552.2" y="615.3" width="4.0" height="6.4" fill="#578eae"/><rect x="571.6" y="588.0" width="29.6" height="7.6" fill="#3e5565" stroke="#70b3d5" stroke-width="1.2"/><rect x="572.2" y="588.6" width="12.9" height="6.4" fill="#578eae"/><rect x="599.9" y="605.8" width="24.5" height="7.6" fill="#3e5565" stroke="#70b3d5" stroke-width="1.2"/><rect x="600.5" y="606.4" width="10.8" height="6.4" fill="#578eae"/><rect x="627.9" y="614.7" width="11.0" height="7.6" fill="#3e5565" stroke="#70b3d5" stroke-width="1.2"/><rect x="628.5" y="615.3" width="5.1" height="6.4" fill="#578eae"/><rect x="663.4" y="614.7" width="9.8" height="7.6" fill="#3e5565" stroke="#70b3d5" stroke-width="1.2"/><rect x="664.0" y="615.3" width="4.6" height="6.4" fill="#578eae"/><rect x="689.9" y="632.5" width="32.0" height="7.6" fill="#3e5565" stroke="#70b3d5" stroke-width="1.2"/><rect x="690.5" y="633.1" width="13.9" height="6.4" fill="#578eae"/><rect x="672.1" y="650.2" width="23.3" height="7.6" fill="#3e5565" stroke="#70b3d5" stroke-width="1.2"/><rect x="672.7" y="650.8" width="10.3" height="6.4" fill="#578eae"/></svg>
<div class="a" style="left:764.5px;top:414px;width:1.6px;height:312px;background:#121315"></div>
<div class="a" style="left:766.1px;top:415.4px;width:2px;height:311px;background:#2a2b2f"></div>
<div class="a" style="left:416.4px;top:415.4px;width:348px;height:2.4px;background:rgba(20,21,24,0.35)"></div>
<svg style="left:0;top:0" width="768" height="799" viewBox="0 0 768 799"><defs><linearGradient id="wg" x1="0" x2="1" y1="0" y2="0"><stop offset="0" stop-color="#8e8f91"/><stop offset="0.04" stop-color="#c4c5c7"/><stop offset="0.16" stop-color="#eeeff1"/><stop offset="1" stop-color="#f1f2f4"/></linearGradient><linearGradient id="bg" x1="0" x2="1" y1="0" y2="0"><stop offset="0" stop-color="#1b1c1f"/><stop offset="0.6" stop-color="#2c2e31"/><stop offset="0.9" stop-color="#4a4d51"/><stop offset="1" stop-color="#1b1c1f"/></linearGradient><linearGradient id="bgb" x1="0" x2="1" y1="0" y2="0"><stop offset="0" stop-color="#22334c"/><stop offset="0.6" stop-color="#2f4a6e"/><stop offset="0.9" stop-color="#44668f"/><stop offset="1" stop-color="#1c2a3f"/></linearGradient></defs><rect x="317" y="415.2" width="97.4" height="311.0" fill="url(#wg)"/><rect x="317" y="719.40" width="97.4" height="1.1" fill="#b4b5b8"/><rect x="317" y="703.70" width="97.4" height="1.1" fill="#b4b5b8"/><rect x="317" y="688.00" width="97.4" height="1.1" fill="#b4b5b8"/><rect x="317" y="672.30" width="97.4" height="1.1" fill="#b4b5b8"/><rect x="317" y="702.40" width="63.2" height="8.60" fill="url(#bg)"/><path d="M380.2 702.40 L375.5 706.70 L380.2 711.00 Z" fill="#141517" opacity="0.85"/><rect x="317" y="685.00" width="63.2" height="8.60" fill="url(#bg)"/><path d="M380.2 685.00 L375.5 689.30 L380.2 693.60 Z" fill="#141517" opacity="0.85"/><rect x="317" y="667.10" width="63.2" height="8.60" fill="url(#bg)"/><path d="M380.2 667.10 L375.5 671.40 L380.2 675.70 Z" fill="#141517" opacity="0.85"/><rect x="317" y="656.70" width="97.4" height="1.1" fill="#b4b5b8"/><rect x="317" y="642.10" width="97.4" height="1.1" fill="#b4b5b8"/><rect x="317" y="627.50" width="97.4" height="1.1" fill="#b4b5b8"/><rect x="317" y="613.10" width="97.4" height="1.1" fill="#b4b5b8"/><rect x="317" y="597.40" width="97.4" height="1.1" fill="#b4b5b8"/><rect x="317" y="581.70" width="97.4" height="1.1" fill="#b4b5b8"/><rect x="317" y="566.00" width="97.4" height="1.1" fill="#b4b5b8"/><rect x="317" y="640.50" width="63.2" height="8.60" fill="url(#bg)"/><path d="M380.2 640.50 L375.5 644.80 L380.2 649.10 Z" fill="#141517" opacity="0.85"/><rect x="317" y="622.90" width="63.2" height="8.60" fill="url(#bg)"/><path d="M380.2 622.90 L375.5 627.20 L380.2 631.50 Z" fill="#141517" opacity="0.85"/><rect x="317" y="596.10" width="63.2" height="8.60" fill="url(#bg)"/><path d="M380.2 596.10 L375.5 600.40 L380.2 604.70 Z" fill="#141517" opacity="0.85"/><rect x="317" y="578.70" width="63.2" height="8.60" fill="url(#bg)"/><path d="M380.2 578.70 L375.5 583.00 L380.2 587.30 Z" fill="#141517" opacity="0.85"/><rect x="317" y="560.80" width="63.2" height="8.60" fill="url(#bgb)"/><path d="M380.2 560.80 L375.5 565.10 L380.2 569.40 Z" fill="#141517" opacity="0.85"/><rect x="317" y="550.40" width="97.4" height="1.1" fill="#b4b5b8"/><rect x="317" y="535.80" width="97.4" height="1.1" fill="#b4b5b8"/><rect x="317" y="521.20" width="97.4" height="1.1" fill="#b4b5b8"/><rect x="317" y="506.80" width="97.4" height="1.1" fill="#b4b5b8"/><rect x="317" y="491.10" width="97.4" height="1.1" fill="#b4b5b8"/><rect x="317" y="475.40" width="97.4" height="1.1" fill="#b4b5b8"/><rect x="317" y="459.70" width="97.4" height="1.1" fill="#b4b5b8"/><rect x="317" y="534.20" width="63.2" height="8.60" fill="url(#bg)"/><path d="M380.2 534.20 L375.5 538.50 L380.2 542.80 Z" fill="#141517" opacity="0.85"/><rect x="317" y="516.60" width="63.2" height="8.60" fill="url(#bg)"/><path d="M380.2 516.60 L375.5 520.90 L380.2 525.20 Z" fill="#141517" opacity="0.85"/><rect x="317" y="489.80" width="63.2" height="8.60" fill="url(#bg)"/><path d="M380.2 489.80 L375.5 494.10 L380.2 498.40 Z" fill="#141517" opacity="0.85"/><rect x="317" y="472.40" width="63.2" height="8.60" fill="url(#bg)"/><path d="M380.2 472.40 L375.5 476.70 L380.2 481.00 Z" fill="#141517" opacity="0.85"/><rect x="317" y="454.50" width="63.2" height="8.60" fill="url(#bg)"/><path d="M380.2 454.50 L375.5 458.80 L380.2 463.10 Z" fill="#141517" opacity="0.85"/><rect x="317" y="444.10" width="97.4" height="1.1" fill="#b4b5b8"/><rect x="317" y="429.50" width="97.4" height="1.1" fill="#b4b5b8"/><rect x="317" y="427.90" width="63.2" height="8.60" fill="url(#bg)"/><path d="M380.2 427.90 L375.5 432.20 L380.2 436.50 Z" fill="#141517" opacity="0.85"/><rect x="317" y="415.20" width="63.2" height="3.70" fill="url(#bg)"/></svg>
<div class="t" style="left:380px;top:646.5px;width:32.5px;text-align:right;font-size:9px;font-weight:bold;color:#38393c;letter-spacing:0.2px">C 4</div>
<div class="t" style="left:380px;top:540.2px;width:32.5px;text-align:right;font-size:9px;font-weight:bold;color:#38393c;letter-spacing:0.2px">C 5</div>
<div class="t" style="left:380px;top:433.9px;width:32.5px;text-align:right;font-size:9px;font-weight:bold;color:#38393c;letter-spacing:0.2px">C 6</div>
<div class="a" style="left:316.5px;top:726.2px;width:452px;height:18.6px;background:#2a2b2f"></div>
<div class="a" style="left:416.4px;top:726.2px;width:352px;height:18.6px;background:#303135"></div>
<div class="a" style="left:416.4px;top:725.4px;width:352px;height:1.6px;background:#1c1d1f"></div>
<div class="t" style="left:420.6px;top:729.6px;font-size:12px;font-weight:bold;color:#cfcfcf;letter-spacing:1px">...</div>
<div class="a" style="left:436.5px;top:726.2px;width:81.5px;height:18.6px;background:#4b8fd2"></div>
<div class="t" style="left:436.5px;top:731.2px;width:81.5px;text-align:center;font-size:11px;color:#fff">ベロシティ</div>
<div class="t" style="left:532.5px;top:731.2px;font-size:11px;color:#c8c9cc">ノートコントローラー</div>
<div class="a" style="left:654.8px;top:726.2px;width:1.2px;height:18.6px;background:#222326"></div>
<div class="t" style="left:669px;top:731.2px;font-size:11px;color:#c8c9cc">サウンドバリエーション</div>
<div class="a" style="left:316.5px;top:744.8px;width:98px;height:55px;background:#2a2b2f;border:1px solid #1b1c1e"></div>
<div class="a" style="left:416.4px;top:744.8px;width:352px;height:55px;background:#2c2d31"></div>
<svg style="left:0;top:0" width="768" height="799" viewBox="0 0 768 799"><rect x="415.8" y="745" width="1" height="54" fill="#3e4044"/><rect x="437.7" y="745" width="1" height="54" fill="#35373b"/><rect x="459.6" y="745" width="1" height="54" fill="#35373b"/><rect x="481.4" y="745" width="1" height="54" fill="#35373b"/><rect x="503.3" y="745" width="1" height="54" fill="#3e4044"/><rect x="525.2" y="745" width="1" height="54" fill="#35373b"/><rect x="547.0" y="745" width="1" height="54" fill="#35373b"/><rect x="568.9" y="745" width="1" height="54" fill="#35373b"/><rect x="590.8" y="745" width="1" height="54" fill="#3e4044"/><rect x="612.7" y="745" width="1" height="54" fill="#35373b"/><rect x="634.5" y="745" width="1" height="54" fill="#35373b"/><rect x="656.4" y="745" width="1" height="54" fill="#35373b"/><rect x="678.3" y="745" width="1" height="54" fill="#3e4044"/><rect x="700.2" y="745" width="1" height="54" fill="#35373b"/><rect x="722.0" y="745" width="1" height="54" fill="#35373b"/><rect x="743.9" y="745" width="1" height="54" fill="#35373b"/><rect x="765.8" y="745" width="1" height="54" fill="#3e4044"/><rect x="411" y="765.5" width="3.4" height="1" fill="#b0b0b0"/><rect x="411" y="788" width="3.4" height="1" fill="#b0b0b0"/></svg>
<div class="a" style="left:416.4px;top:744.4px;width:349.6px;height:1.4px;background:#17181a"></div>
<div class="a" style="left:764.5px;top:744.4px;width:1.6px;height:55px;background:#17181a"></div>
<div class="a" style="left:766.1px;top:726.2px;width:2px;height:73px;background:#2a2b2f"></div>
<div class="t" style="left:372px;top:746.8px;font-size:10.5px;color:#b4b5b8">100.00</div>
<div class="a" style="left:414.6px;top:379px;width:2.2px;height:347.4px;background:#8a8b8e"></div>
<div class="a" style="left:414.6px;top:744.8px;width:2.2px;height:55px;background:#8a8b8e"></div>
<div class="a" style="left:0;top:766.2px;width:71px;height:18.4px;background:#2e2f33;border-top:1px solid #232427"></div>
<div class="a" style="left:52.4px;top:767px;width:1px;height:17.6px;background:#26272a"></div>
<div class="t" style="left:20.4px;top:771px;font-size:11px;color:#dedede;text-shadow:0 0 0.4px #dedede">M</div>
<div class="a" style="left:0;top:784.6px;width:71px;height:14.4px;background:#1c1d1f"></div>
<div class="a" style="left:0;top:784.6px;width:71px;height:2.6px;background:#0f1011"></div>
<svg style="left:0;top:788px" width="71" height="11" viewBox="0 0 71 11"><path d="M0 1.4 H10.8 L13.8 11 H0 Z" fill="#5a5e64"/><circle cx="63" cy="13.4" r="5" fill="none" stroke="#8a8c90" stroke-width="1"/></svg>
<!--ED-END-->

</body>
</html>
